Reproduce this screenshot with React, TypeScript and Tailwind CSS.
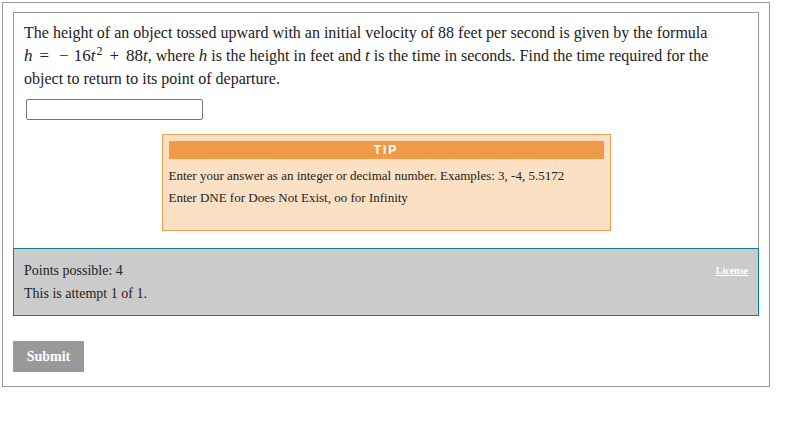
import React from 'react'

const serif = "font-['Liberation_Serif','Times_New_Roman',serif]"

function MathFormula() {
  return (
    <span className="whitespace-nowrap text-[17px]">
      <i>h</i>
      <span className="ml-[7px]">=</span>
      <span className="ml-[10px] mr-[5px]">−</span>
      16<i>t</i>
      <sup className="text-[12px] ml-[1px]">2</sup>
      <span className="mx-[7px]">+</span>
      88<i>t</i>
    </span>
  )
}

export default function App() {
  return (
    <div className={`${serif} text-[#222] bg-white w-[807px] h-[429px]`}>
      <div className="ml-[2px] mt-[2px] w-[768px] border border-[#999] px-[10px] pt-[9px] pb-[14px]">
        {/* Question */}
        <div className="border-x border-t border-[#999] px-[10px] pt-[8px] pb-[17px]">
          <p className="text-[16px] leading-[23px] pr-[10px]">
            The height of an object tossed upward with an initial velocity of 88 feet per second is given by the
            formula <MathFormula />, where <i className="text-[17px]">h</i> is the height in feet and{' '}
            <i className="text-[17px]">t</i> is the time in seconds. Find the time required for the object to return
            to its point of departure.
          </p>
          <input
            type="text"
            className="mt-[9px] ml-[2px] block w-[177px] h-[21px] border border-[#777] rounded-[2px] bg-white"
          />

          {/* Tip */}
          <div className="mx-auto mt-[14px] w-[449px] h-[97px] border border-[#f0a050] bg-[#fce0c4] px-[6px] pt-[6px]">
            <div className="h-[18px] bg-[#f09a48] text-center text-white font-['Liberation_Sans',Arial,sans-serif] font-bold text-[12px] leading-[18px] tracking-[2px]">
              TIP
            </div>
            <p className="mt-[6px] text-[13px] leading-[22px]">
              Enter your answer as an integer or decimal number. Examples: 3, -4, 5.5172
            </p>
            <p className="text-[13px] leading-[22px]">Enter DNE for Does Not Exist, oo for Infinity</p>
          </div>
        </div>

        {/* Footer info */}
        <div className="flex justify-between border border-[#0a7fa0] bg-[#cbcbcb] px-[10px] pt-[10px] pb-[10px] text-[14px] leading-[23px]">
          <div>
            <p>Points possible: 4</p>
            <p>This is attempt 1 of 1.</p>
          </div>
          <a href="#" className="text-[10px] font-bold text-white underline leading-[23px]">
            License
          </a>
        </div>

        <button className="mt-[25px] block w-[71px] h-[31px] bg-[#999] text-white font-bold text-[14px]">
          Submit
        </button>
      </div>
    </div>
  )
}
